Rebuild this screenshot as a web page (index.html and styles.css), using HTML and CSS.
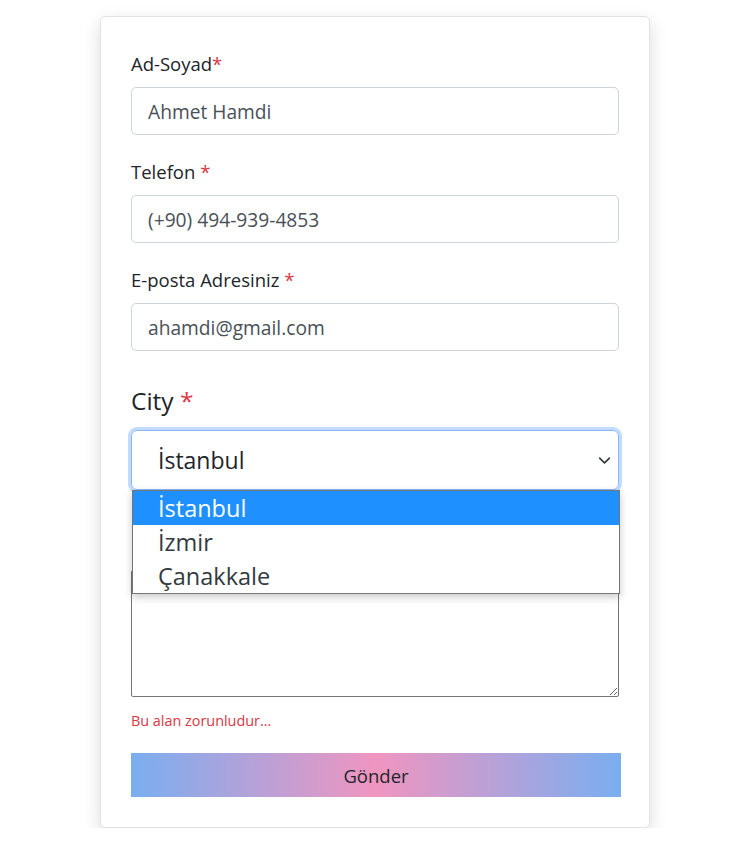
FILE: index.html
```html
<!DOCTYPE html>
<html lang="tr">
<head>
<meta charset="utf-8">
<title>Form</title>
<link rel="stylesheet" href="styles.css">
</head>
<body>
<div class="page">
  <form class="card">
    <div class="field">
      <label class="label">Ad-Soyad<span class="req">*</span></label>
      <input class="input" type="text" value="Ahmet Hamdi">
    </div>
    <div class="field">
      <label class="label">Telefon <span class="req">*</span></label>
      <input class="input" type="text" value="(+90) 494-939-4853">
    </div>
    <div class="field">
      <label class="label">E-posta Adresiniz <span class="req">*</span></label>
      <input class="input" type="text" value="ahamdi@gmail.com">
    </div>
    <div class="field city-field">
      <label class="label label-lg">City <span class="req">*</span></label>
      <div class="select-wrap">
        <div class="select">
          <span>İstanbul</span>
          <svg class="chev" width="16" height="12" viewBox="0 0 16 16"><path d="m2 5 6 6 6-6" fill="none" stroke="#343a40" stroke-width="2" stroke-linecap="round" stroke-linejoin="round"/></svg>
        </div>
        <ul class="dropdown">
          <li class="opt active">İstanbul</li>
          <li class="opt">İzmir</li>
          <li class="opt">Çanakkale</li>
        </ul>
      </div>
    </div>
    <div class="field msg-field">
      <textarea class="textarea" aria-label="Mesajınız"></textarea>
      <div class="error">Bu alan zorunludur...</div>
    </div>
    <button class="btn" type="button">Gönder</button>
  </form>
</div>
</body>
</html>
```
FILE: styles.css
```css
* { box-sizing: border-box; }
html, body { margin: 0; padding: 0; background: #fff; }
body {
  font-family: "Open Sans", "Noto Sans", "Liberation Sans", sans-serif;
  color: #212529;
}
.page {
  display: flex;
  justify-content: flex-start;
  padding: 16px 0 0 100px;
}
.card {
  width: 550px;
  border: 1px solid #e2e2e2;
  border-radius: 5px;
  background: #fff;
  box-shadow: 0 6px 18px rgba(0,0,0,0.14);
  padding: 33px 30px 30px 30px;
  display: flex;
  flex-direction: column;
}
.field { display: flex; flex-direction: column; margin-bottom: 23px; }
.label {
  font-size: 18.5px;
  line-height: 27px;
  margin-bottom: 10px;
  color: #212529;
}
.req { color: #dc3545; }
.input {
  height: 48px;
  width: 488px;
  border: 1px solid #ced4da;
  border-radius: 5px;
  padding: 0 16px;
  font-family: inherit;
  font-size: 19.2px;
  color: #495057;
  background: #fff;
  outline: none;
}
.city-field { margin-top: 9px; }
.label-lg { font-size: 24.5px; line-height: 36px; margin-bottom: 11px; }
.select-wrap { position: relative; }
.select {
  height: 60px;
  width: 488px;
  border: 1px solid #86b7fe;
  border-radius: 6px;
  box-shadow: 0 0 0 3px rgba(13,110,253,0.25);
  display: flex;
  align-items: center;
  justify-content: space-between;
  padding: 0 5px 0 26px;
  font-size: 23px;
  color: #212529;
}
.chev { display: block; width: 17px; height: 13px; }
.dropdown {
  position: absolute;
  left: 1px;
  top: 60px;
  width: 488px;
  margin: 0;
  padding: 0;
  list-style: none;
  background: #fff;
  border: 1px solid #767676;
  box-shadow: 0 3px 8px rgba(0,0,0,0.22);
  z-index: 2;
}
.opt {
  height: 34px;
  line-height: 34px;
  padding-left: 25px;
  font-size: 23.5px;
  color: #333a40;
}
.opt.active { background: #1e90ff; color: #fff; }
.msg-field { margin-bottom: 0; }
.textarea {
  width: 488px;
  height: 127px;
  margin: 57px 0 0 0;
  border: 1px solid #767676;
  border-radius: 2px;
  resize: vertical;
  font-family: inherit;
  display: block;
}
.error {
  font-size: 14.4px;
  line-height: 21px;
  color: #dc3545;
  margin-top: 13px;
  margin-bottom: 22px;
}
.btn {
  width: 490px;
  height: 44px;
  border: none;
  border-radius: 0;
  background: linear-gradient(90deg, #7aaef0 0%, #f095c0 50%, #7aaef0 100%);
  font-family: inherit;
  font-size: 18.5px;
  color: #212529;
  padding: 0;
}
```
